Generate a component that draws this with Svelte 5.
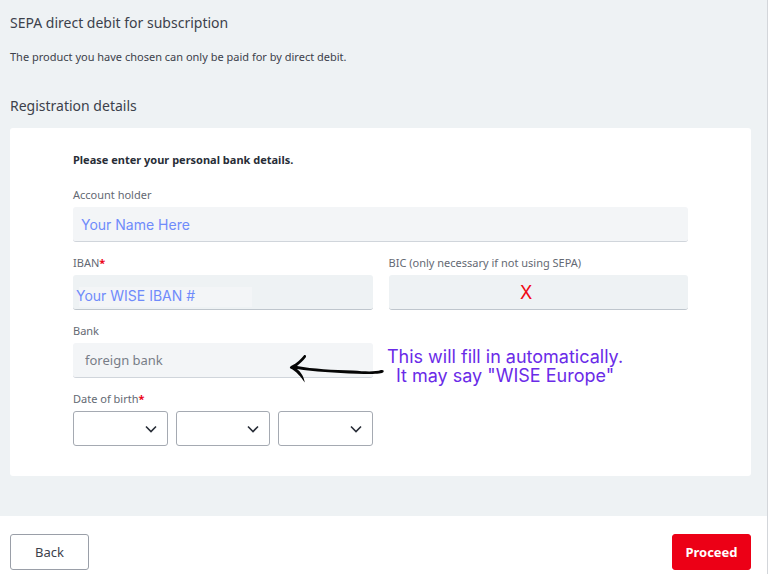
<script>
  let holder = 'Your Name Here';
  let iban = 'Your WISE IBAN #';
  let bic = 'X';
  let bank = 'foreign bank';

  const days = Array.from({ length: 31 }, (_, i) => i + 1);
  const months = Array.from({ length: 12 }, (_, i) => i + 1);
  const years = Array.from({ length: 90 }, (_, i) => 2010 - i);

  const birthParts = [
    { name: 'Day', options: days },
    { name: 'Month', options: months },
    { name: 'Year', options: years }
  ];
</script>

<style>
  :global(body) {
    background-color: #fff;
  }

  .page {
    border-right: solid 1px #d3d6da;
    color: #3c414b;
    font-family: 'Noto Sans', 'Open Sans', sans-serif;
    min-height: 100vh;
    box-sizing: border-box;
  }

  main {
    background-color: #eef2f4;
    padding: 12px 16px 40px 10px;
  }

  h1, h2 {
    font-size: 14px;
    font-weight: 400;
    line-height: 22px;
    margin: 0;
  }

  .intro {
    font-size: 11px;
    line-height: 16px;
    margin: 15px 0 30px;
  }

  .card {
    background-color: #fff;
    border-radius: 3px;
    margin-top: 11px;
    padding: 24px 63px 30px;
  }

  .lead {
    color: #282d37;
    font-size: 11px;
    font-weight: 700;
    line-height: 16px;
    margin: 0 0 19px;
  }

  .grid {
    display: grid;
    grid-template-columns: 1fr 1fr;
    gap: 13px 16px;
  }

  .wide {
    grid-column: 1 / -1;
  }

  .field {
    position: relative;
    min-width: 0;
  }

  label, legend {
    color: #646973;
    display: block;
    font-size: 11px;
    line-height: 16px;
    margin-bottom: 4px;
    padding: 0;
  }

  .required {
    color: #ec0016;
    font-weight: 700;
  }

  fieldset {
    border: 0;
    margin: 0;
    padding: 0;
  }

  input, select {
    box-sizing: border-box;
    display: block;
    font-family: inherit;
    height: 35px;
    width: 100%;
  }

  input {
    background-color: #f3f5f7;
    border: 0;
    border-bottom: solid 1px #d0d5db;
    border-radius: 3px;
    color: #6f8bfb;
    font-family: Inter, 'Noto Sans', sans-serif;
    font-size: 14px;
    padding: 0 8px;
  }

  .iban, .bic {
    background-color: #eef2f4;
    border-bottom-color: #bfc6cd;
  }

  .iban {
    background-image: linear-gradient(#f3f5f7, #f3f5f7);
    background-position: 6px 12px;
    background-repeat: no-repeat;
    background-size: 173px 20px;
    padding: 6px 3px 0;
  }

  .bic {
    color: #f00a14;
    font-size: 18px;
    padding-right: 32px;
    text-align: center;
  }

  .bank {
    color: #787d87;
    font-family: inherit;
    font-size: 13px;
    padding: 0 12px;
  }

  .arrow {
    position: absolute;
    right: -12px;
    bottom: -6px;
    width: 96px;
    height: 32px;
  }

  .note {
    align-self: end;
    color: #6a2be8;
    font-family: Inter, 'Noto Sans', sans-serif;
    font-size: 18px;
    line-height: 19px;
    margin: 0 0 -7px -4px;
    text-align: center;
    width: 241px;
    white-space: nowrap;
  }

  .birth {
    display: flex;
    gap: 8px;
  }

  .select {
    flex: 1;
    position: relative;
  }

  select {
    appearance: none;
    background-color: #fff;
    border: solid 1px #a5aab2;
    border-radius: 3px;
    color: #282d37;
    font-size: 13px;
    padding: 0 30px 0 12px;
  }

  .chevron {
    pointer-events: none;
    position: absolute;
    right: 11px;
    top: 14px;
    width: 12px;
    height: 8px;
  }

  footer {
    display: flex;
    justify-content: space-between;
    padding: 18px 16px 4px 10px;
  }

  button {
    background-color: #fff;
    border: solid 1px #9a9fa8;
    border-radius: 3px;
    color: #3c414b;
    font-family: inherit;
    font-size: 13px;
    height: 36px;
    padding: 0;
    width: 79px;
  }

  .primary {
    background-color: #ec0016;
    border-color: #ec0016;
    color: #fff;
    font-weight: 700;
  }
</style>

<div class="page">
  <main>
    <h1>SEPA direct debit for subscription</h1>
    <p class="intro">The product you have chosen can only be paid for by direct debit.</p>
    <h2>Registration details</h2>

    <form class="card" id="bank-details">
      <p class="lead">Please enter your personal bank details.</p>
      <div class="grid">
        <div class="field wide">
          <label for="holder">Account holder</label>
          <input id="holder" type="text" bind:value={holder} />
        </div>
        <div class="field">
          <label for="iban">IBAN<span class="required">*</span></label>
          <input id="iban" class="iban" type="text" bind:value={iban} />
        </div>
        <div class="field">
          <label for="bic">BIC (only necessary if not using SEPA)</label>
          <input id="bic" class="bic" type="text" bind:value={bic} />
        </div>
        <div class="field">
          <label for="bank">Bank</label>
          <input id="bank" class="bank" type="text" readonly value={bank} />
          <svg class="arrow" viewBox="0 0 96 32" aria-hidden="true">
            <path d="M2 14 C8 11.500 12 7 15.300 3 Q17.500 2.500 17 5 C14 9 11 11.500 8 14 C24 17 44 18 64 18.500 C76 19.500 86 20 92 18 Q95.500 17.500 94.500 20 C93 22.500 80 22 68 21.700 C46 21 25 19.500 8 17 C12 20 15 25 15.800 30.500 C12 25 7 19 1.500 16.500 Q0 15.500 2 14Z" fill="#050505" />
          </svg>
        </div>
        <p class="note">This will fill in automatically.<br />It may say "WISE Europe"</p>
        <fieldset>
          <legend>Date of birth<span class="required">*</span></legend>
          <div class="birth">
            {#each birthParts as part}
              <div class="select">
                <select aria-label={part.name}>
                  <option value=""></option>
                  {#each part.options as option}
                    <option value={option}>{option}</option>
                  {/each}
                </select>
                <svg class="chevron" viewBox="0 0 12 8" aria-hidden="true">
                  <path d="M1 1.500 6 6.500 11 1.500" fill="none" stroke="#282d37" stroke-width="1.600" />
                </svg>
              </div>
            {/each}
          </div>
        </fieldset>
      </div>
    </form>
  </main>

  <footer>
    <button type="button">Back</button>
    <button class="primary" type="submit" form="bank-details">Proceed</button>
  </footer>
</div>
